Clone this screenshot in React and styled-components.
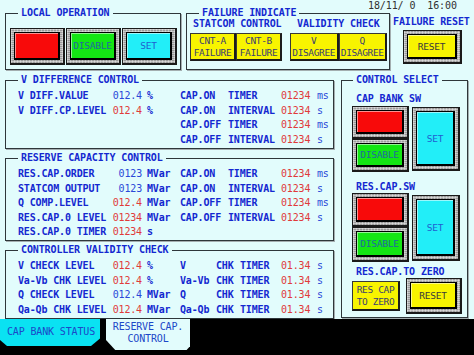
import React from 'react';
import styled, { createGlobalStyle } from 'styled-components';

const BG = '#e2fcfc';
const BLUE = '#1428d0';
const VBLUE = '#2a48d8';
const RED = '#e03a3a';
const MONO = `"DejaVu Sans Mono", "Liberation Mono", monospace`;

const Global = createGlobalStyle`
  html, body { margin: 0; padding: 0; background: ${BG}; }
  body { width: 474px; height: 355px; overflow: hidden; font-family: ${MONO}; font-size: 10px; }
`;

const Screen = styled.div`
  width: 474px;
  height: 355px;
  display: flex;
  flex-direction: column;
  background: ${BG};
`;

const Main = styled.div`
  height: 319px;
  display: flex;
  flex-direction: column;
`;

const TopRow = styled.div`
  display: flex;
  align-items: flex-start;
  padding-left: 5px;
  height: 70px;
`;

const MidRow = styled.div`
  display: flex;
  align-items: flex-start;
  padding-left: 5px;
  gap: 7px;
  margin-top: 10px;
`;

const LeftCol = styled.div`
  display: flex;
  flex-direction: column;
`;

const Frame = styled.section`
  box-sizing: border-box;
  width: ${p => p.$w}px;
  height: ${p => p.$h}px;
  margin-top: ${p => p.$mt || 0}px;
  margin-left: ${p => p.$ml || 0}px;
  border: 1px solid #2e363a;
  box-shadow: 1px 1px 0 #a4aeb0;
  display: flex;
  flex-direction: column;
`;

const Title = styled.h2`
  margin: -7px 0 0 ${p => (p.$ml != null ? p.$ml : 12)}px;
  padding: 0 3px;
  height: 12px;
  line-height: 12px;
  background: ${BG};
  align-self: flex-start;
  font: bold 10px ${MONO};
  letter-spacing: -0.12px;
  color: ${BLUE};
  white-space: pre;
`;

const Caption = styled.div`
  font: bold 10px ${MONO};
  letter-spacing: -0.12px;
  color: ${BLUE};
  line-height: 12px;
  height: 12px;
  white-space: pre;
  margin-top: ${p => p.$mt || 0}px;
  padding-left: ${p => p.$pl || 0}px;
`;

/* ---------- bevel buttons ---------- */
const Bevel = styled.div`
  box-sizing: border-box;
  width: ${p => p.$w}px;
  height: ${p => p.$h}px;
  margin-top: ${p => p.$mt || 0}px;
  border: 1px solid #1a1a1a;
  border-right-width: 2px;
  border-bottom-width: 2px;
  padding: 3px;
  background:
    repeating-linear-gradient(90deg, rgba(255,255,255,0.35) 0 1px, transparent 1px 3px),
    repeating-linear-gradient(0deg, #9a9a9a 0 1px, #c4c4c4 1px 2px);
  display: flex;
  flex-shrink: 0;
`;

const Face = styled.div`
  flex: 1;
  box-sizing: border-box;
  border: 1px solid #000;
  border-right-width: 2px;
  border-bottom-width: 2px;
  background: ${p => p.$bg};
  box-shadow: inset 1px 1px 0 rgba(255, 255, 255, 0.55);
  display: flex;
  align-items: center;
  justify-content: center;
  font: 9.5px ${MONO};
  color: ${p => p.$fg || '#2060d0'};
  letter-spacing: -0.2px;
`;

const Btn = ({ w, h, mt, bg, fg, children }) => (
  <Bevel $w={w} $h={h} $mt={mt}>
    <Face $bg={bg} $fg={fg}>{children}</Face>
  </Bevel>
);

const COLORS = {
  red: '#f80a0a',
  green: '#14e614',
  cyan: '#22eef8',
  yellow: '#f8f400',
};

/* ---------- yellow indicators ---------- */
const Lamp = styled.div`
  box-sizing: border-box;
  flex: ${p => (p.$w ? 'none' : 1)};
  width: ${p => (p.$w ? `${p.$w}px` : 'auto')};
  height: ${p => p.$h || 28}px;
  background: ${COLORS.yellow};
  border: 1px solid #383838;
  border-right: 2px solid #1c1c1c;
  border-bottom: 2px solid #1c1c1c;
  display: flex;
  flex-direction: column;
  align-items: center;
  justify-content: center;
  font: 9.5px ${MONO};
  line-height: 11.5px;
  color: #3a3e70;
  letter-spacing: -0.35px;
  white-space: pre;
  overflow: hidden;
`;

/* ---------- top area ---------- */
const BtnRow = styled.div`
  display: flex;
  gap: 1px;
  margin: 9px 0 0 4px;
`;

const FailBody = styled.div`
  display: flex;
  gap: 8px;
  margin: -1px 0 0 3px;
`;

const FailCol = styled.div`
  width: ${p => p.$w}px;
  display: flex;
  flex-direction: column;
`;

const LampRow = styled.div`
  display: flex;
  margin-top: 3px;
`;

const RightCol = styled.div`
  width: 84px;
  display: flex;
  flex-direction: column;
`;

const Clock = styled.div`
  margin-left: -22px;
  line-height: 12px;
  height: 12px;
  font: 10px ${MONO};
  letter-spacing: -0.1px;
  color: #303030;
  white-space: pre;
`;

const ResetWrap = styled.div`
  margin: 2px 0 0 13px;
`;

/* ---------- data rows ---------- */
const Rows = styled.div`
  padding: 3px 0 0 12px;
`;

const COLS_CAP = '78px 46px 38px 48px 53px 36px 1fr';
const COLS_CHK = '78px 46px 38px 36px 24px 41px 36px 1fr';

const Row = styled.div`
  display: grid;
  grid-template-columns: ${p => p.$cols};
  height: 14.5px;
  line-height: 14.5px;
  white-space: pre;
  font-size: 10px;
  letter-spacing: -0.15px;
`;

const Lbl = styled.span`
  font-weight: bold;
  color: ${BLUE};
  padding-left: ${p => (p.$unit ? 5 : 0)}px;
`;

const Num = styled.span`
  color: ${p => (p.$red ? RED : VBLUE)};
  text-align: ${p => (p.$right ? 'right' : 'left')};
`;

const Unit2 = styled.span`
  color: ${VBLUE};
`;

const CapRow = ({ label = '', val = '', red, unit = '', name, word, val2 }) => {
  const secUnit = word === 'TIMER' ? 'ms' : 's';
  return (
    <Row $cols={COLS_CAP}>
      <Lbl>{label}</Lbl>
      <Num $right $red={red}>{val}</Num>
      <Lbl $unit>{unit}</Lbl>
      <Lbl>{name || ''}</Lbl>
      <Lbl>{word || ''}</Lbl>
      <Num $red>{val2 || ''}</Num>
      <Unit2>{val2 ? secUnit : ''}</Unit2>
    </Row>
  );
};

const ChkRow = ({ label, val, red, unit, name }) => (
  <Row $cols={COLS_CHK}>
    <Lbl>{label}</Lbl>
    <Num $right $red={red}>{val}</Num>
    <Lbl $unit>{unit}</Lbl>
    <Lbl>{name}</Lbl>
    <Lbl>CHK</Lbl>
    <Lbl>TIMER</Lbl>
    <Num $red>01.34</Num>
    <Unit2>s</Unit2>
  </Row>
);

/* ---------- control select ---------- */
const SwitchBlock = styled.div`
  display: flex;
  gap: 3px;
  margin: ${p => p.$mt || 0}px 0 0 10px;
`;

const Stack = styled.div`
  display: flex;
  flex-direction: column;
`;

const ZeroRow = styled.div`
  display: flex;
  align-items: center;
  gap: 6px;
  margin-left: 10px;
`;

/* ---------- bottom tabs ---------- */
const TabBar = styled.div`
  flex: 1;
  background: #000;
  display: flex;
  align-items: flex-start;
  gap: 6px;
`;

const Tab = styled.div`
  box-sizing: border-box;
  width: ${p => p.$w}px;
  height: ${p => p.$h}px;
  background: ${p => (p.$active ? '#0ae2f2' : BG)};
  color: #1c48c8;
  font: 10px ${MONO};
  letter-spacing: -0.15px;
  white-space: pre;
  display: flex;
  flex-direction: column;
  justify-content: ${p => (p.$active ? 'center' : 'flex-start')};
  align-items: ${p => (p.$active ? 'flex-start' : 'center')};
  padding: ${p => (p.$active ? '0 0 2px 7px' : '2px 0 0 0')};
  line-height: 12px;
  clip-path: ${p => p.$clip};
`;

export default function App() {
  return (
    <Screen>
      <Global />
      <Main>
        <TopRow>
          <Frame $w={176} $h={57} $mt={13}>
            <Title>LOCAL OPERATION</Title>
            <BtnRow>
              <Btn w={55} h={37} bg={COLORS.red} />
              <Btn w={55} h={37} bg={COLORS.green} fg="#206aa0">DISABLE</Btn>
              <Btn w={55} h={37} bg={COLORS.cyan}>SET</Btn>
            </BtnRow>
          </Frame>

          <Frame $w={204} $h={57} $mt={13} $ml={5}>
            <Title>FAILURE INDICATE</Title>
            <FailBody>
              <FailCol $w={92}>
                <Caption $pl={3}>STATCOM CONTROL</Caption>
                <LampRow>
                  <Lamp><span>CNT-A</span><span>FAILURE</span></Lamp>
                  <Lamp><span>CNT-B</span><span>FAILURE</span></Lamp>
                </LampRow>
              </FailCol>
              <FailCol $w={97}>
                <Caption $pl={7}>VALIDITY CHECK</Caption>
                <LampRow>
                  <Lamp><span>V</span><span>DISAGREE</span></Lamp>
                  <Lamp><span>Q</span><span>DISAGREE</span></Lamp>
                </LampRow>
              </FailCol>
            </FailBody>
          </Frame>

          <RightCol>
            <Clock>{'18/11/ 0  16:00'}</Clock>
            <Caption $mt={4} $pl={3}>FAILURE RESET</Caption>
            <ResetWrap>
              <Btn w={59} h={34} bg={COLORS.yellow} fg="#3a3a3a">RESET</Btn>
            </ResetWrap>
          </RightCol>
        </TopRow>

        <MidRow>
          <LeftCol>
            <Frame $w={329} $h={69}>
              <Title>V DIFFERENCE CONTROL</Title>
              <Rows>
                <CapRow label="V DIFF.VALUE" val="012.4" unit="%" name="CAP.ON" word="TIMER" val2="01234" />
                <CapRow label="V DIFF.CP.LEVEL" val="012.4" red unit="%" name="CAP.ON" word="INTERVAL" val2="01234" />
                <CapRow name="CAP.OFF" word="TIMER" val2="01234" />
                <CapRow name="CAP.OFF" word="INTERVAL" val2="01234" />
              </Rows>
            </Frame>

            <Frame $w={329} $h={83} $mt={9}>
              <Title>RESERVE CAPACITY CONTROL</Title>
              <Rows>
                <CapRow label="RES.CAP.ORDER" val="0123" unit="MVar" name="CAP.ON" word="TIMER" val2="01234" />
                <CapRow label="STATCOM OUTPUT" val="0123" unit="MVar" name="CAP.ON" word="INTERVAL" val2="01234" />
                <CapRow label="Q COMP.LEVEL" val="012.4" red unit="MVar" name="CAP.OFF" word="TIMER" val2="01234" />
                <CapRow label="RES.CAP.0 LEVEL" val="01234" red unit="MVar" name="CAP.OFF" word="INTERVAL" val2="01234" />
                <CapRow label="RES.CAP.0 TIMER" val="01234" red unit="s" />
              </Rows>
            </Frame>

            <Frame $w={329} $h={69} $mt={9}>
              <Title>CONTROLLER VALIDITY CHECK</Title>
              <Rows>
                <ChkRow label="V CHECK LEVEL" val="012.4" red unit="%" name="V" />
                <ChkRow label="Va-Vb CHK LEVEL" val="012.4" red unit="%" name="Va-Vb" />
                <ChkRow label="Q CHECK LEVEL" val="012.4" unit="MVar" name="Q" />
                <ChkRow label="Qa-Qb CHK LEVEL" val="012.4" red unit="MVar" name="Qa-Qb" />
              </Rows>
            </Frame>
          </LeftCol>

          <Frame $w={127} $h={238}>
            <Title $ml={11}>CONTROL SELECT</Title>
            <Caption $mt={7} $pl={14}>CAP BANK SW</Caption>
            <SwitchBlock $mt={1}>
              <Stack>
                <Btn w={57} h={33} bg={COLORS.red} />
                <Btn w={57} h={33} bg={COLORS.green} fg="#206aa0">DISABLE</Btn>
              </Stack>
              <Btn w={48} h={64} mt={1} bg={COLORS.cyan}>SET</Btn>
            </SwitchBlock>
            <Caption $mt={9} $pl={14}>RES.CAP.SW</Caption>
            <SwitchBlock>
              <Stack>
                <Btn w={57} h={34} bg={COLORS.red} />
                <Btn w={57} h={35} bg={COLORS.green} fg="#206aa0">DISABLE</Btn>
              </Stack>
              <Btn w={48} h={66} mt={2} bg={COLORS.cyan}>SET</Btn>
            </SwitchBlock>
            <Caption $mt={4} $pl={14}>RES.CAP.TO ZERO</Caption>
            <ZeroRow>
              <Lamp $w={48} $h={30}><span>RES CAP</span><span>TO ZERO</span></Lamp>
              <Btn w={56} h={36} bg={COLORS.yellow} fg="#3a3a3a">RESET</Btn>
            </ZeroRow>
          </Frame>
        </MidRow>
      </Main>

      <TabBar>
        <Tab
          $active
          $w={100}
          $h={27}
          $clip="polygon(0 0, 100% 0, 100% 72%, 91% 100%, 7% 100%, 0 78%)"
        >
          CAP BANK STATUS
        </Tab>
        <Tab
          $w={84}
          $h={31}
          $clip="polygon(0 0, 100% 0, 100% 88%, 96% 100%, 11% 100%, 0 68%)"
        >
          <span>RESERVE CAP.</span>
          <span>CONTROL</span>
        </Tab>
      </TabBar>
    </Screen>
  );
}
